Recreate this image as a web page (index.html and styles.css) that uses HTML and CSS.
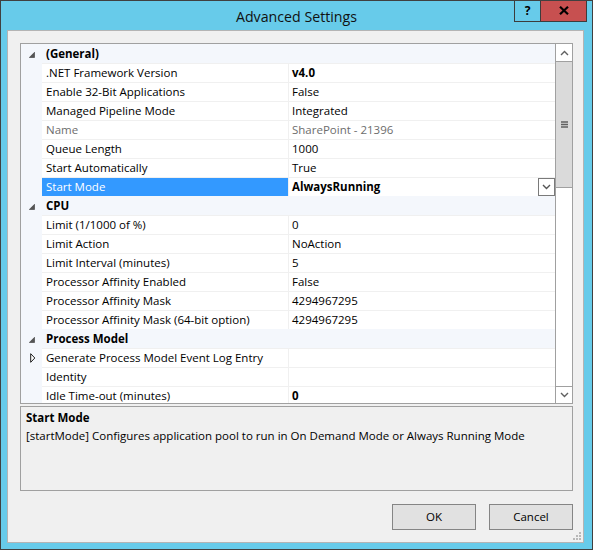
FILE: index.html
```html
<!DOCTYPE html>
<html>
<head>
<meta charset="utf-8">
<title>Advanced Settings</title>
<link rel="stylesheet" href="styles.css">
</head>
<body>
<div class="window">
  <div class="titlebar">
    <div></div>
    <div class="title">Advanced Settings</div>
    <div class="caption">
      <div class="help">?</div>
      <div class="close"><svg width="10" height="9" viewBox="0 0 10 9"><path d="M1 0.8 L9 8.2 M9 0.8 L1 8.2" stroke="#000" stroke-width="2.2" fill="none"/></svg></div>
    </div>
  </div>
  <div class="client">
    <div class="grid">
      <div class="rows">
        <div class="row cat"><span class="margin"><svg class="exp" width="6" height="6" viewBox="0 0 6 6"><polygon points="5.5,0.3 5.5,5.5 0.3,5.5" fill="#555" stroke="#3a3a3a" stroke-width="0.6"/></svg></span><span class="catname">(General)</span></div>
        <div class="row"><span class="margin"></span><span class="name">.NET Framework Version</span><span class="value bold">v4.0</span></div>
        <div class="row"><span class="margin"></span><span class="name">Enable 32-Bit Applications</span><span class="value">False</span></div>
        <div class="row"><span class="margin"></span><span class="name">Managed Pipeline Mode</span><span class="value">Integrated</span></div>
        <div class="row disabled"><span class="margin"></span><span class="name">Name</span><span class="value">SharePoint - 21396</span></div>
        <div class="row"><span class="margin"></span><span class="name">Queue Length</span><span class="value">1000</span></div>
        <div class="row"><span class="margin"></span><span class="name">Start Automatically</span><span class="value">True</span></div>
        <div class="row selected"><span class="margin"></span><span class="name">Start Mode</span><span class="value bold"><span>AlwaysRunning</span><span class="dropbtn"><svg width="9" height="6" viewBox="0 0 9 6"><path d="M1 1 L4.5 4.5 L8 1" stroke="#555" stroke-width="1.4" fill="none"/></svg></span></span></div>
        <div class="row cat"><span class="margin"><svg class="exp" width="6" height="6" viewBox="0 0 6 6"><polygon points="5.5,0.3 5.5,5.5 0.3,5.5" fill="#555" stroke="#3a3a3a" stroke-width="0.6"/></svg></span><span class="catname">CPU</span></div>
        <div class="row"><span class="margin"></span><span class="name">Limit (1/1000 of %)</span><span class="value">0</span></div>
        <div class="row"><span class="margin"></span><span class="name">Limit Action</span><span class="value">NoAction</span></div>
        <div class="row"><span class="margin"></span><span class="name">Limit Interval (minutes)</span><span class="value">5</span></div>
        <div class="row"><span class="margin"></span><span class="name">Processor Affinity Enabled</span><span class="value">False</span></div>
        <div class="row"><span class="margin"></span><span class="name">Processor Affinity Mask</span><span class="value">4294967295</span></div>
        <div class="row"><span class="margin"></span><span class="name">Processor Affinity Mask (64-bit option)</span><span class="value">4294967295</span></div>
        <div class="row cat"><span class="margin"><svg class="exp" width="6" height="6" viewBox="0 0 6 6"><polygon points="5.5,0.3 5.5,5.5 0.3,5.5" fill="#555" stroke="#3a3a3a" stroke-width="0.6"/></svg></span><span class="catname">Process Model</span></div>
        <div class="row"><span class="margin"><svg class="col" width="6" height="10" viewBox="0 0 6 10"><polygon points="0.7,0.7 4.8,5 0.7,9.3" fill="#fff" stroke="#1e1e1e" stroke-width="1"/></svg></span><span class="name">Generate Process Model Event Log Entry</span><span class="value"></span></div>
        <div class="row"><span class="margin"></span><span class="name">Identity</span><span class="value"></span></div>
        <div class="row"><span class="margin"></span><span class="name">Idle Time-out (minutes)</span><span class="value bold">0</span></div>
      </div>
      <div class="scrollbar">
        <div class="sb-btn sb-up"><svg width="9" height="6" viewBox="0 0 9 6"><path d="M1 5 L4.5 1.5 L8 5" stroke="#606060" stroke-width="1.4" fill="none"/></svg></div>
        <div class="sb-thumb"><svg width="7" height="7" viewBox="0 0 7 7"><path d="M0 1 H7 M0 3.5 H7 M0 6 H7" stroke="#606060" stroke-width="1.3"/></svg></div>
        <div class="sb-track"></div>
        <div class="sb-btn sb-down"><svg width="9" height="6" viewBox="0 0 9 6"><path d="M1 1 L4.5 4.5 L8 1" stroke="#606060" stroke-width="1.4" fill="none"/></svg></div>
      </div>
    </div>
    <div class="desc">
      <div class="desc-title">Start Mode</div>
      <div class="desc-text">[startMode] Configures application pool to run in On Demand Mode or Always Running Mode</div>
    </div>
    <div class="buttons">
      <div class="btn">OK</div>
      <div class="btn">Cancel</div>
    </div>
    <svg class="grip" width="10" height="10" viewBox="0 0 10 10">
      <rect x="7" y="1" width="2" height="2" fill="#b8b8b8"/>
      <rect x="4" y="4" width="2" height="2" fill="#b8b8b8"/>
      <rect x="7" y="4" width="2" height="2" fill="#b8b8b8"/>
      <rect x="1" y="7" width="2" height="2" fill="#b8b8b8"/>
      <rect x="4" y="7" width="2" height="2" fill="#b8b8b8"/>
      <rect x="7" y="7" width="2" height="2" fill="#b8b8b8"/>
    </svg>
  </div>
</div>
</body>
</html>
```

FILE: styles.css
```css
* { box-sizing: border-box; }
body {
  margin: 0;
  font-family: "Open Sans", "Noto Sans", sans-serif;
  font-size: 11.5px;
  color: #000;
}
.window {
  width: 593px;
  height: 550px;
  border: 1px solid #404040;
  background: #67cbea;
  display: flex;
  flex-direction: column;
  padding: 0 8px 6px 6px;
}
.titlebar {
  height: 29px;
  flex: none;
  margin: 0 -8px 0 -6px;
  display: grid;
  grid-template-columns: 1fr auto 1fr;
  align-items: center;
}
.title {
  font-size: 14.2px;
  color: #111;
  padding-top: 1px;
}
.caption {
  justify-self: end;
  align-self: start;
  display: flex;
  height: 21px;
  margin-right: 5px;
  border: 1px solid #3c3c3c;
  border-top: 0;
}
.help {
  width: 26px;
  border-right: 1px solid #3c3c3c;
  background: #67cbea;
  font-weight: bold;
  font-size: 12px;
  text-align: center;
  line-height: 20px;
}
.close {
  width: 45px;
  background: #c75050;
  display: flex;
  align-items: center;
  justify-content: center;
  padding-bottom: 1px;
}
.close svg { display: block; }
.client {
  flex: 1;
  background: #f0f0f0;
  border: 1px solid #b4b4b4;
  padding: 12px 10px 0 12px;
  display: flex;
  flex-direction: column;
  position: relative;
}
.grid {
  height: 361px;
  flex: none;
  border: 1px solid #a0a0a0;
  display: flex;
  background: #fff;
}
.rows {
  flex: 1;
  overflow: hidden;
}
.row {
  display: flex;
  height: 19px;
  line-height: 18px;
}
.cat {
  background: #f4f7fc;
  font-weight: bold;
  line-height: 19px;
}
.margin {
  width: 21px;
  flex: none;
  background: #f4f7fc;
}
.margin svg { display: block; }
.margin .exp { margin: 8px 0 0 8px; }
.margin .col { margin: 5px 0 0 9px; }
.catname { padding-left: 4px; }
.name {
  width: 247px;
  flex: none;
  padding-left: 4px;
  border-top: 1px solid #f0f0f0;
  border-right: 1px solid #f0f0f0;
  white-space: nowrap;
  overflow: hidden;
}
.value {
  flex: 1;
  display: flex;
  padding-left: 3px;
  border-top: 1px solid #f0f0f0;
  white-space: nowrap;
}
.bold { font-weight: bold; }
.disabled .name, .disabled .value { color: #6d6d6d; }
.selected .name {
  background: #3399ff;
  color: #fff;
}
.dropbtn {
  margin-left: auto;
  width: 17px;
  height: 18px;
  border: 1px solid #7a7a7a;
  background: #fff;
  display: flex;
  align-items: center;
  justify-content: center;
}
.dropbtn svg { display: block; }
.scrollbar {
  width: 17px;
  flex: none;
  border-left: 1px solid #a0a0a0;
  display: flex;
  flex-direction: column;
  background: #fff;
}
.sb-btn {
  display: flex;
  align-items: center;
  justify-content: center;
}
.sb-btn svg, .sb-thumb svg { display: block; }
.sb-up {
  height: 18px;
  border-bottom: 1px solid #a0a0a0;
}
.sb-thumb {
  height: 126px;
  border-bottom: 1px solid #a0a0a0;
  background: #dadada;
  display: flex;
  align-items: center;
  justify-content: center;
}
.sb-track { flex: 1; }
.sb-down {
  height: 17px;
  border-top: 1px solid #a0a0a0;
}
.desc {
  margin-top: 2px;
  height: 85px;
  flex: none;
  border: 1px solid #a0a0a0;
  padding: 2px 0 0 5px;
  line-height: 18px;
}
.desc-title { font-weight: bold; }
.buttons {
  display: flex;
  justify-content: flex-end;
  gap: 13px;
  margin-top: 13px;
}
.btn {
  width: 84px;
  height: 26px;
  border: 1px solid #858585;
  background: #e1e1e1;
  text-align: center;
  line-height: 24px;
}
.grip {
  position: absolute;
  right: 1px;
  bottom: 1px;
  display: block;
}
```
